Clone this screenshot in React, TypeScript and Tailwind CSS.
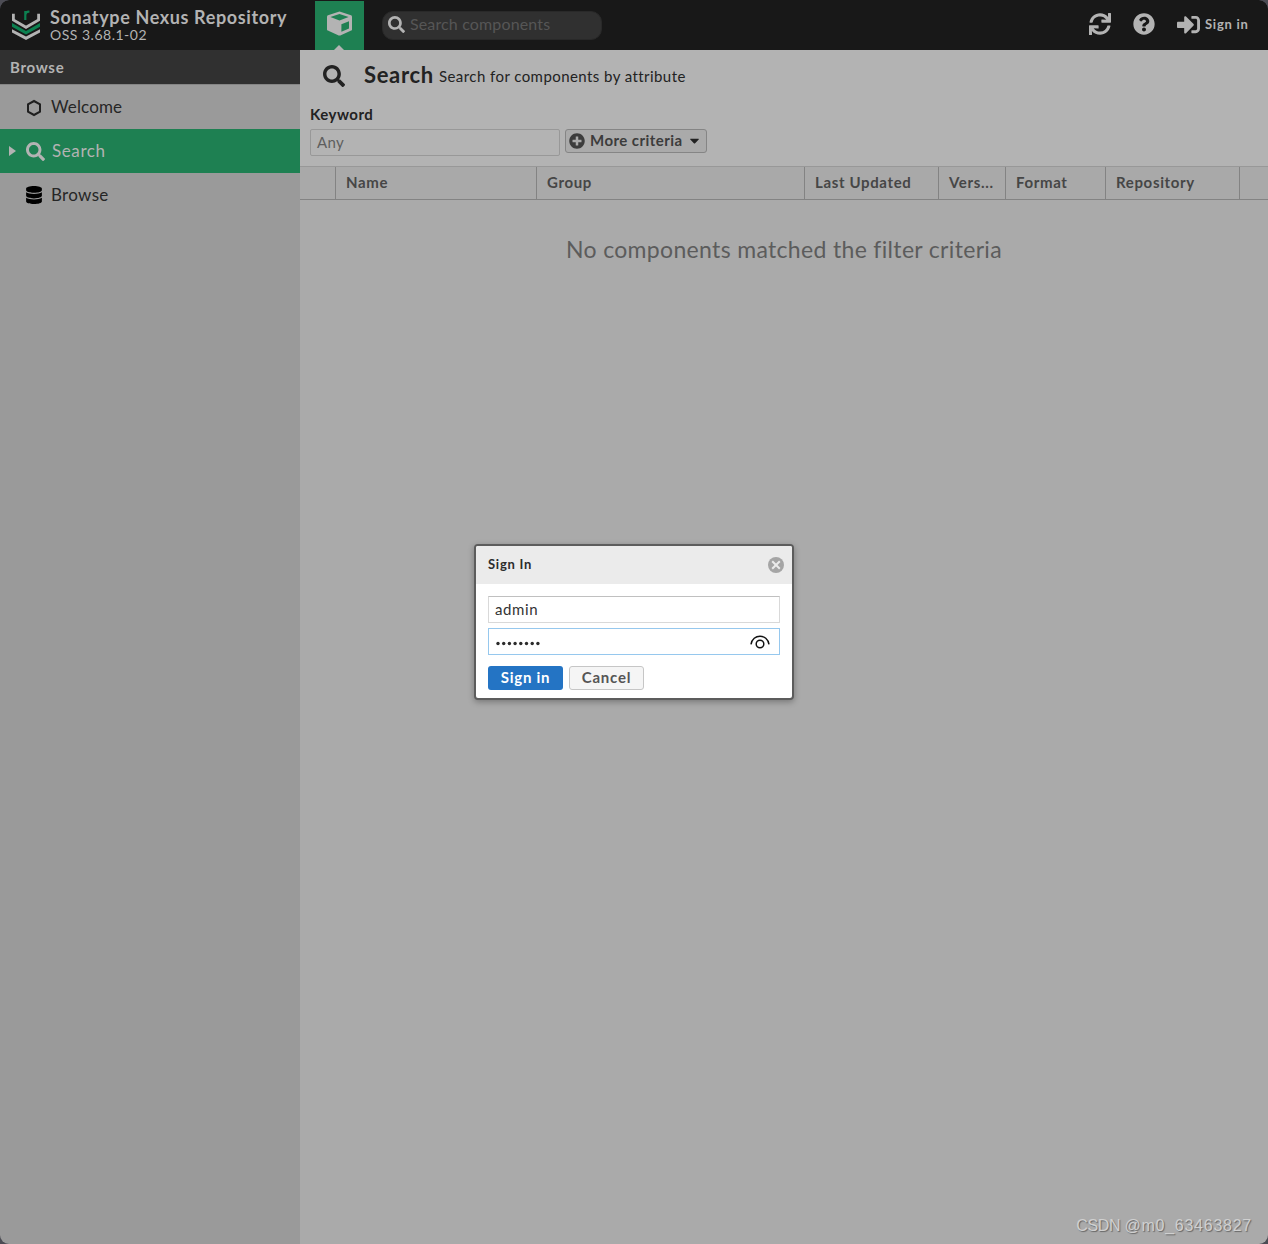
import React from "react";
import { FaSearch, FaSync, FaQuestionCircle, FaSignInAlt, FaDatabase, FaPlusCircle, FaCaretDown } from "react-icons/fa";

function Logo() {
  return (
    <svg width="28" height="31" viewBox="0 0 28 31" fill="none" className="mb-px">
      <path d="M1.4 4.8V11L14 18.3L26.6 11V4.8" stroke="#b3b3b3" strokeWidth="2.8" />
      <path d="M0 14.1L14 21.9L28 14.1V17.7L14 25.5L0 17.7Z" fill="#0c8050" />
      <path d="M0 20.2L14 27.4L28 20.2V23.4L14 31L0 23.4Z" fill="#b3b3b3" />
      <path d="M13.3 11V2M13.3 6C13.6 3.4 15 2.4 17.4 2.8" stroke="#0c8050" strokeWidth="2.2" />
    </svg>
  );
}

function Cube() {
  return (
    <svg width="25" height="25" viewBox="0 0 25 25">
      <path d="M12.5 0.5L24 4.2Q25 4.6 25 5.7V18.4Q25 19.2 24.2 19.6L13.3 24.4Q12.5 24.7 11.7 24.4L0.8 19.6Q0 19.2 0 18.4V5.7Q0 4.6 1 4.2Z" fill="#b3b3b3" />
      <path d="M3.4 6L12.5 3L21.6 6L12.5 9.4Z" fill="#1e8052" />
      <path d="M14.4 13.2L22 10.3V17.4L14.4 20.8Z" fill="#1e8052" />
    </svg>
  );
}

const columns: [string, string][] = [
  ["", "w-[36px]"],
  ["Name", "w-[201px]"],
  ["Group", "w-[268px]"],
  ["Last Updated", "w-[134px]"],
  ["Vers...", "w-[67px]"],
  ["Format", "w-[100px]"],
  ["Repository", "w-[134px]"],
];

function Header() {
  return (
    <header className="flex h-[50px] shrink-0 items-center rounded-t-[9px] bg-[#181818] text-[#b3b3b3]">
      <div className="flex w-[315px] shrink-0 items-center pl-3">
        <Logo />
        <div className="ml-[10px] whitespace-nowrap">
          <div className="text-[18px] leading-[20px] font-bold"><span className="tracking-[0.63px]">Sonatype Nexus Repository</span></div>
          <div className="text-[14px] leading-[16px]"><span className="tracking-[0.5px]">OSS 3.68.1-02</span></div>
        </div>
      </div>
      <div className="flex h-[49px] w-[49px] flex-col items-center self-end bg-[#1e8052] pt-[10px]">
        <Cube />
        <svg width="10" height="5" viewBox="0 0 10 5" className="mt-auto mr-px"><path d="M5 0L10 5H0Z" fill="#b3b3b3" /></svg>
      </div>
      <div className="ml-[18px] flex h-[29px] w-[220px] items-center rounded-[11px] border border-[#292929] bg-[#303030] pb-[2px] pl-[5px]">
        <FaSearch size={17} />
        <span className="ml-[5px] text-[16px] tracking-[0.14px] text-[#565656]">Search components</span>
      </div>
      <div className="ml-auto flex items-center pr-[19px] pb-[2px]">
        <FaSync size={22} />
        <FaQuestionCircle size={22} className="ml-[22px]" />
        <FaSignInAlt size={23} className="ml-[22px]" />
        <span className="ml-[5px] w-[44px] pt-px text-[13px] font-bold tracking-[0.75px] whitespace-nowrap">Sign in</span>
      </div>
    </header>
  );
}

function Sidebar() {
  return (
    <aside className="flex w-[300px] shrink-0 flex-col bg-[#9a9a9a] text-[17px] text-[#262626]">
      <div className="flex h-[34px] items-center bg-[#303030] pl-[10px] text-[15px] font-bold text-[#b3b3b3]"><span className="tracking-[0.7px]">Browse</span></div>
      <div className="flex h-[45px] items-center border-t border-[#858585] pl-[26px]">
        <svg width="16" height="18" viewBox="0 0 16 18" className="mt-[2px]"><path d="M8 2L14 5.3V12.7L8 16L2 12.7V5.3Z" fill="none" stroke="#202020" strokeWidth="2" /></svg>
        <span className="ml-[9px] tracking-[0.15px]">Welcome</span>
      </div>
      <div className="flex h-[44px] items-center bg-[#1e8052] pl-[9px] text-[#b3b3b3]">
        <svg width="7" height="10" viewBox="0 0 7 10"><path d="M0 0L7 5L0 10Z" fill="#b3b3b3" /></svg>
        <FaSearch size={19} className="ml-[10px]" />
        <span className="ml-[7px] tracking-[0.6px]">Search</span>
      </div>
      <div className="flex h-[44px] items-center pl-[25px]">
        <FaDatabase size={18} color="#000" />
        <span className="ml-[8px] tracking-[0.3px]">Browse</span>
      </div>
    </aside>
  );
}

function SignInDialog() {
  return (
    <div className="absolute top-[544px] left-[474px] flex h-[156px] w-[320px] flex-col overflow-hidden rounded-[4px] border-2 border-[#5c5c5c] bg-white shadow-[0_2px_6px_rgba(0,0,0,0.3)]">
      <div className="flex h-[38px] shrink-0 items-center justify-between bg-[#ebebeb] pr-[8px] pl-3">
        <span className="text-[13px] font-bold tracking-[0.75px] text-[#2c2c2c]">Sign In</span>
        <svg width="16" height="16" viewBox="0 0 16 16"><circle cx="8" cy="8" r="8" fill="#a5a5a5" /><path d="M4.2 4.2L11.8 11.8M11.8 4.2L4.2 11.8" stroke="#ebebeb" strokeWidth="2" /></svg>
      </div>
      <div className="flex flex-col px-3 pt-3">
        <div className="flex h-[27px] items-center border border-[#d9d9d9] border-t-[#c0c0c0] pl-[6px] text-[15px] text-[#333]"><span className="tracking-[0.6px]">admin</span></div>
        <div className="mt-[5px] flex h-[27px] items-center justify-between border border-[#96c8ee] pr-[8px] pl-[7px]">
          <svg width="45" height="5" viewBox="0 0 45 5" className="mt-[3px]">
            <g fill="#2c2c2c">{[2, 7.7, 13.4, 19.1, 24.8, 30.5, 36.2, 41.9].map((x) => <circle key={x} cx={x} cy="2.5" r="1.7" />)}</g>
          </svg>
          <svg width="22" height="16" viewBox="0 0 22 16" fill="none" stroke="#111" strokeWidth="1.5"><path d="M2 10.4C3.5 -0.5 18.5 -0.5 20 10.4" /><circle cx="11" cy="10" r="3.8" /></svg>
        </div>
        <div className="mt-[11px] flex gap-[6px] text-[15px] font-bold tracking-[0.75px]">
          <button className="h-6 w-[75px] rounded-[3px] bg-[#2474c4] pb-[2px] leading-[22px] text-white">Sign in</button>
          <button className="h-6 w-[75px] rounded-[3px] border border-[#c6c6c6] bg-[#f5f5f5] pb-[2px] leading-[20px] text-[#555]">Cancel</button>
        </div>
      </div>
    </div>
  );
}

export default function App() {
  return (
    <div className="h-[1244px] w-[1268px] bg-[#4c4c54] [font-family:Lato,sans-serif]">
      <div className="relative flex h-full flex-col overflow-hidden rounded-[9px]">
        <Header />
        <div className="flex min-h-0 flex-1">
          <Sidebar />
          <main className="flex min-w-0 flex-1 flex-col bg-[#aaaaaa]">
            <section className="h-[116px] bg-[#b3b3b3] text-[#222]">
              <div className="flex h-[50px] items-center pl-[23px]">
                <FaSearch size={22} className="mt-[2px]" />
                <h1 className="mb-px ml-[19px] w-[75px] text-[22px] font-bold tracking-[0.65px]">Search</h1>
                <span className="mt-[3px] text-[15px] tracking-[0.43px]">Search for components by attribute</span>
              </div>
              <div className="pl-[10px]">
                <div className="mt-[3px] h-[26px] text-[15px] leading-[22px] font-bold tracking-[0.5px]">Keyword</div>
                <div className="flex gap-[5px]">
                  <div className="flex h-[27px] w-[250px] items-center rounded-[2px] border border-[#989898] pl-[6px] text-[15px] tracking-[0.3px] text-[#5e5e5e]">Any</div>
                  <button className="flex h-6 w-[142px] items-center rounded-[3px] border border-[#858585] bg-[#aaaaaa] pl-[3px] text-[15px] font-bold text-[#3c3c3c]">
                    <FaPlusCircle size={16} />
                    <span className="ml-[5px] pb-[2px] tracking-[0.45px] whitespace-nowrap">More criteria</span>
                    <FaCaretDown size={15} className="mb-px ml-[4px]" color="#222" />
                  </button>
                </div>
              </div>
            </section>
            <div className="flex h-[34px] shrink-0 border-y border-t-[#989898] border-b-[#838383] bg-[#a9a9a9] text-[15px] font-bold text-[#464646]">
              {columns.map(([name, width], i) => (
                <div key={i} className={`flex shrink-0 items-center border-r border-[#838383] pb-[2px] pl-[10px] tracking-[0.65px] ${width}`}><span>{name}</span></div>
              ))}
            </div>
            <div className="pt-[34px] text-center text-[23px] leading-[30px] text-[#5c5c5c]"><span className="tracking-[0.33px]">No components matched the filter criteria</span></div>
          </main>
        </div>
        <SignInDialog />
        <div className="absolute right-[16px] bottom-[8px] text-[16px] leading-[20px] text-[#d0d0d0] [font-family:'Liberation_Sans',sans-serif] [text-shadow:1px_1px_1px_#666]"><span className="tracking-[-0.3px]">CSDN </span><span className="tracking-[0.75px]">@m0_63463827</span></div>
      </div>
    </div>
  );
}
